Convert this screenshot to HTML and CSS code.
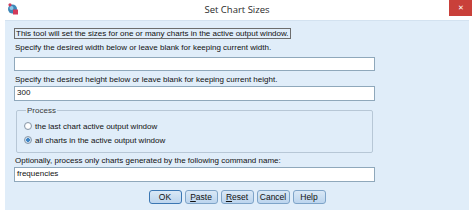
FILE: index.html
```html
<!DOCTYPE html>
<html lang="en">

<head>
    <meta charset="UTF-8">
    <title>Set Chart Sizes</title>
    <link rel="stylesheet" href="styles.css">
</head>

<body>
    <div class="window">
        <div class="titlebar">
            <svg class="app-icon" width="12" height="12" viewBox="0 0 12 12">
                <circle cx="5.5" cy="6" r="4.5" fill="#3d87b8"/>
                <circle cx="4.5" cy="5" r="2" fill="#8cc6e8"/>
                <rect x="6" y="6.5" width="5" height="5" fill="#d23a5a"/>
                <circle cx="3" cy="1.8" r="1.6" fill="#d23a5a"/>
            </svg>
            <div class="title">Set Chart Sizes</div>
            <div class="close">&#x2715;</div>
        </div>

        <div class="panel">
            <div class="intro">This tool will set the sizes for one or many charts in the active output window.</div>

            <div class="caption first">Specify the desired width below or leave blank for keeping current width.</div>
            <div class="field width-field"></div>

            <div class="caption second">Specify the desired height below or leave blank for keeping current height.</div>
            <div class="field height-field">300</div>

            <fieldset class="process">
                <legend>Process</legend>
                <div class="radio-row"><span class="radio"></span>the last chart active output window</div>
                <div class="radio-row"><span class="radio checked"></span>all charts in the active output window</div>
            </fieldset>

            <div class="caption third">Optionally, process only charts generated by the following command name:</div>
            <div class="field command-field">frequencies</div>

            <div class="buttons">
                <div class="btn default">OK</div>
                <div class="btn"><u>P</u>aste</div>
                <div class="btn"><u>R</u>eset</div>
                <div class="btn">Cancel</div>
                <div class="btn">Help</div>
            </div>
        </div>
    </div>
</body>

</html>
```

FILE: styles.css
```css
* {
    box-sizing: border-box;
    margin: 0;
    padding: 0;
}

body {
    background-color: #fff;
    font-family: 'Liberation Sans', Arial, sans-serif;
    font-size: 8px;
    color: #111;
}

.window {
    width: 474px;
    height: 216px;
    background-color: #fff;
}

/* barra de titulo */
.titlebar {
    height: 20px;
    display: flex;
    align-items: flex-start;
    position: relative;
}

.app-icon {
    margin: 3px 0 0 7px;
}

.title {
    position: absolute;
    left: 0;
    right: 0;
    top: 3px;
    text-align: center;
    font-family: 'Open Sans', sans-serif;
    font-size: 9.5px;
    color: #2a2a2a;
}

.close {
    position: absolute;
    right: 2px;
    top: 0;
    width: 23px;
    height: 16px;
    background-color: #c9403a;
    color: #fff;
    font-size: 7px;
    text-align: center;
    line-height: 16px;
}

/* painel principal */
.panel {
    margin: 0 5px;
    height: 190px;
    background-color: #e0edf9;
    border-top: 1px solid #d3e2f0;
    padding: 7px 0 0 9px;
    display: flex;
    flex-direction: column;
    align-items: flex-start;
}

.intro {
    border: 1px solid #6d6d6d;
    height: 11px;
    line-height: 9px;
    padding: 0 1px;
}

.caption {
    height: 10px;
    line-height: 10px;
    margin-left: 1px;
    flex-shrink: 0;
}

.caption.first {
    margin-top: 4px;
}

.caption.second {
    margin-top: 4px;
}

.caption.third {
    margin-top: 3px;
}

.field {
    width: 361px;
    height: 14px;
    flex-shrink: 0;
    background-color: #fff;
    border: 1px solid #8fa8bb;
    line-height: 12px;
    padding-left: 2px;
}

.width-field {
    margin-top: 4px;
}

.height-field {
    margin-top: 1px;
    height: 15px;
}

.command-field {
    height: 15px;
    margin-top: 1px;
}

.process {
    width: 357px;
    margin: 5px 0 0 2px;
    border: 1px solid #b7c7d6;
    border-radius: 2px;
    padding: 4px 0 5px 7px;
}

.process legend {
    padding: 0 1px;
    margin-left: 2px;
    color: #3a3a3a;
    line-height: 9px;
}

.radio-row {
    display: flex;
    align-items: center;
    height: 14px;
}

.radio {
    width: 8px;
    height: 8px;
    border-radius: 50%;
    border: 1px solid #8a99a8;
    background: radial-gradient(circle, #fff 40%, #e4e9ee);
    margin-right: 3px;
}

.radio.checked {
    background: radial-gradient(circle, #3f86c6 38%, #c8dcee 48%);
}

.buttons {
    align-self: stretch;
    display: flex;
    justify-content: center;
    gap: 3px;
    margin: 8px 9px 0 0;
}

.btn {
    width: 33px;
    height: 14px;
    line-height: 12px;
    font-size: 8.5px;
    text-align: center;
    border: 1px solid #7ea4c8;
    border-radius: 3px;
    background: linear-gradient(#d9e8f6, #bcd5ee);
}

.btn.default {
    border-color: #3b77b3;
}
```
